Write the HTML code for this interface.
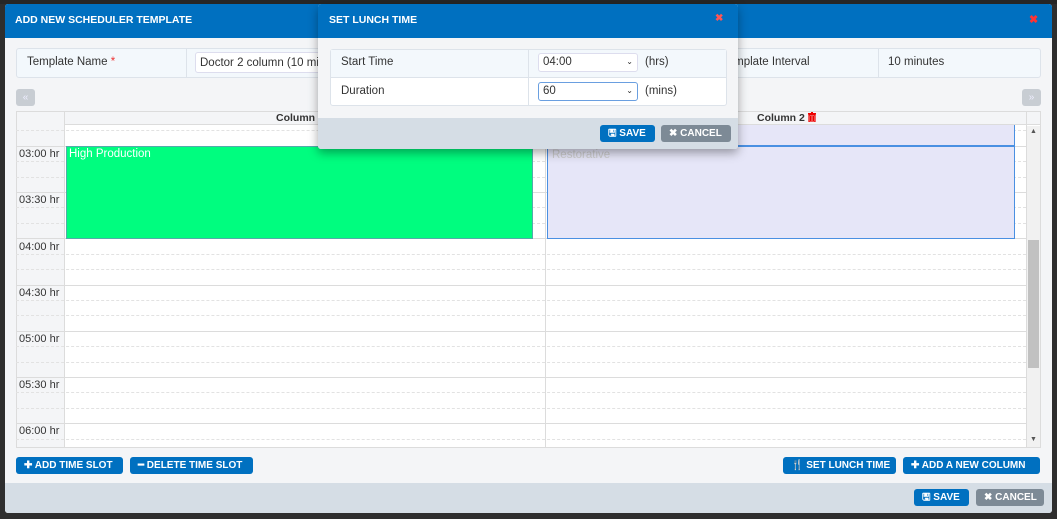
<!DOCTYPE html><html><head><style>
*{box-sizing:border-box;margin:0;padding:0}
body{width:1057px;height:519px;background:#2e2e2e;position:relative;overflow:hidden;font-family:"Liberation Sans",sans-serif;font-size:11px;color:#333}
.a{position:absolute}
.hdr{background:#0070c0;color:#fff;font-weight:bold;font-size:10.5px}
.btn{position:absolute;background:#0070c0;color:#fff;font-weight:bold;font-size:10px;border-radius:3px;height:17px;line-height:17px;padding-left:8px;white-space:nowrap}
.gray{background:#7d8a96}
.sl{position:absolute;left:16px;width:1010px;height:1px;background:#dcdcdc}
.dl{position:absolute;left:16px;width:1010px;height:0;border-top:1px dashed #e2e2e2}
.tm{position:absolute;left:19px;font-size:11px;color:#333}
</style></head><body>
<div class="a" style="left:0;top:0;width:1057px;height:4px;background:#262626"></div>
<div class="a" style="left:5px;top:4px;width:1047px;height:509px;background:#f4f5f7;border-radius:3px;overflow:hidden">
 <div class="a hdr" style="left:0;top:0;width:1047px;height:34px;line-height:32px;padding-left:10px">ADD NEW SCHEDULER TEMPLATE</div>
 <div class="a" style="left:1024px;top:9px;color:#f33;font-size:11px;font-weight:bold">✖</div>
 <div class="a" style="left:0;top:479px;width:1047px;height:30px;background:#d5dde5"></div>
</div>
<div class="a" style="left:16px;top:48px;width:1025px;height:30px;background:#f3f8fc;border:1px solid #dde3ea;border-radius:3px"></div>
<div class="a" style="left:186px;top:49px;width:1px;height:28px;background:#dde3ea"></div>
<div class="a" style="left:878px;top:49px;width:1px;height:28px;background:#dde3ea"></div>
<div class="a" style="left:27px;top:56px;font-size:11.5px">Template Name <span style="color:#e33">*</span></div>
<div class="a" style="left:195px;top:52px;width:140px;height:21px;background:#fff;border:1px solid #dde;border-radius:3px;padding:4px 4px;white-space:nowrap;overflow:hidden;font-size:11.5px">Doctor 2 column (10 min</div>
<div class="a" style="left:722px;top:56px;font-size:11.5px">Template Interval</div>
<div class="a" style="left:888px;top:56px;font-size:11.5px">10 minutes</div>
<div class="a" style="left:16px;top:89px;width:19px;height:17px;background:#c8cdd3;border-radius:3px;color:#eef;text-align:center;font-size:10px;line-height:17px">«</div>
<div class="a" style="left:1022px;top:89px;width:19px;height:17px;background:#c8cdd3;border-radius:3px;color:#eef;text-align:center;font-size:10px;line-height:17px">»</div>
<div class="a" style="left:16px;top:111px;width:1025px;height:337px;background:#fff;border:1px solid #dcdcdc"></div>
<div class="a" style="left:17px;top:112px;width:1023px;height:13px;background:#f4f5f7;border-bottom:1px solid #dcdcdc"></div>
<div class="a" style="left:17px;top:112px;width:47px;height:335px;background:#f4f5f7"></div>
<div class="a" style="left:64px;top:112px;width:1px;height:335px;background:#dcdcdc"></div>
<div class="a" style="left:545px;top:112px;width:1px;height:335px;background:#dcdcdc"></div>
<div class="a" style="left:1026px;top:112px;width:1px;height:335px;background:#dcdcdc"></div>
<div class="a" style="left:276px;top:112px;font-weight:bold;font-size:10.5px">Column 1</div>
<div class="a" style="left:757px;top:112px;font-weight:bold;font-size:10.5px">Column 2 <svg width="8" height="10" viewBox="0 0 8 10" style="vertical-align:-1px"><rect x="0" y="1" width="8" height="1.5" fill="#e00"/><rect x="3" y="0" width="2" height="1" fill="#e00"/><path d="M1 3h6v7H1z M2.5 4v5 M4 4v5 M5.5 4v5" fill="none" stroke="#e00" stroke-width="1.2"/></svg></div>
<div class="dl" style="top:130px"></div>
<div class="sl" style="top:146px"></div><div class="dl" style="top:161px"></div><div class="dl" style="top:177px"></div>
<div class="sl" style="top:192px"></div><div class="dl" style="top:207px"></div><div class="dl" style="top:223px"></div>
<div class="sl" style="top:238px"></div><div class="dl" style="top:254px"></div><div class="dl" style="top:269px"></div>
<div class="sl" style="top:285px"></div><div class="dl" style="top:300px"></div><div class="dl" style="top:315px"></div>
<div class="sl" style="top:331px"></div><div class="dl" style="top:346px"></div><div class="dl" style="top:362px"></div>
<div class="sl" style="top:377px"></div><div class="dl" style="top:392px"></div><div class="dl" style="top:408px"></div>
<div class="sl" style="top:423px"></div><div class="dl" style="top:439px"></div>
<div class="tm" style="top:148px">03:00 hr</div>
<div class="tm" style="top:194px">03:30 hr</div>
<div class="tm" style="top:241px">04:00 hr</div>
<div class="tm" style="top:287px">04:30 hr</div>
<div class="tm" style="top:333px">05:00 hr</div>
<div class="tm" style="top:379px">05:30 hr</div>
<div class="tm" style="top:425px">06:00 hr</div>
<div class="a" style="left:66px;top:146px;width:467px;height:93px;background:#00fd7f;border:1px solid #5aa;color:#fff;padding:1px 2px;font-size:11.5px">High Production</div>
<div class="a" style="left:547px;top:125px;width:468px;height:21px;background:#e6e6f8;border-bottom:1px solid #4a90e2;border-left:1px solid #4a90e2;border-right:1px solid #4a90e2"></div>
<div class="a" style="left:547px;top:146px;width:468px;height:93px;background:#e6e6f8;border:1px solid #4a90e2;color:#ccc;padding:2px 4px;font-size:11.5px">Restorative</div>
<div class="a" style="left:1027px;top:126px;width:13px;height:321px;background:#f1f1f1"></div>
<div class="a" style="left:1028px;top:240px;width:11px;height:128px;background:#c1c1c1"></div>
<div class="a" style="left:1030px;top:128px;font-size:7px;color:#555">▲</div>
<div class="a" style="left:1030px;top:436px;font-size:7px;color:#555">▼</div>
<div class="btn" style="left:16px;top:457px;width:107px">✚ ADD TIME SLOT</div>
<div class="btn" style="left:130px;top:457px;width:123px">━ DELETE TIME SLOT</div>
<div class="btn" style="left:783px;top:457px;width:113px">🍴 SET LUNCH TIME</div>
<div class="btn" style="left:903px;top:457px;width:137px">✚ ADD A NEW COLUMN</div>
<div class="btn" style="left:914px;top:489px;width:55px">🖫 SAVE</div>
<div class="btn gray" style="left:976px;top:489px;width:68px">✖ CANCEL</div>
<div class="a" style="left:318px;top:4px;width:420px;height:145px;background:#f4f5f7;border-radius:3px;box-shadow:0 4px 10px rgba(0,0,0,.35);overflow:hidden">
 <div class="a hdr" style="left:0;top:0;width:420px;height:34px;line-height:32px;padding-left:11px">SET LUNCH TIME</div>
 <div class="a" style="left:397px;top:9px;color:#f55;font-size:10px;font-weight:bold">✖</div>
 <div class="a" style="left:12px;top:45px;width:397px;height:57px;background:#fff;border:1px solid #dde3ea;border-radius:3px"></div>
 <div class="a" style="left:13px;top:46px;width:395px;height:28px;background:#f3f8fc;border-bottom:1px solid #dde3ea"></div>
 <div class="a" style="left:210px;top:46px;width:1px;height:55px;background:#dde3ea"></div>
 <div class="a" style="left:23px;top:52px;font-size:11.5px">Start Time</div>
 <div class="a" style="left:23px;top:81px;font-size:11.5px">Duration</div>
 <div class="a" style="left:220px;top:49px;width:100px;height:19px;background:#fff;border:1px solid #dde;border-radius:3px;padding:2px 4px;font-size:11.5px">04:00<span style="position:absolute;right:4px;top:3px;font-size:8px">⌄</span></div>
 <div class="a" style="left:220px;top:78px;width:100px;height:19px;background:#fff;border:1px solid #6a9fe0;border-radius:3px;padding:2px 4px;font-size:11.5px">60<span style="position:absolute;right:4px;top:3px;font-size:8px">⌄</span></div>
 <div class="a" style="left:327px;top:52px;font-size:11.5px">(hrs)</div>
 <div class="a" style="left:327px;top:81px;font-size:11.5px">(mins)</div>
 <div class="a" style="left:0;top:114px;width:420px;height:31px;background:#d5dde5"></div>
 <div class="btn" style="left:282px;top:121px;width:55px">🖫 SAVE</div>
 <div class="btn gray" style="left:343px;top:121px;width:70px">✖ CANCEL</div>
</div>
</body></html>
